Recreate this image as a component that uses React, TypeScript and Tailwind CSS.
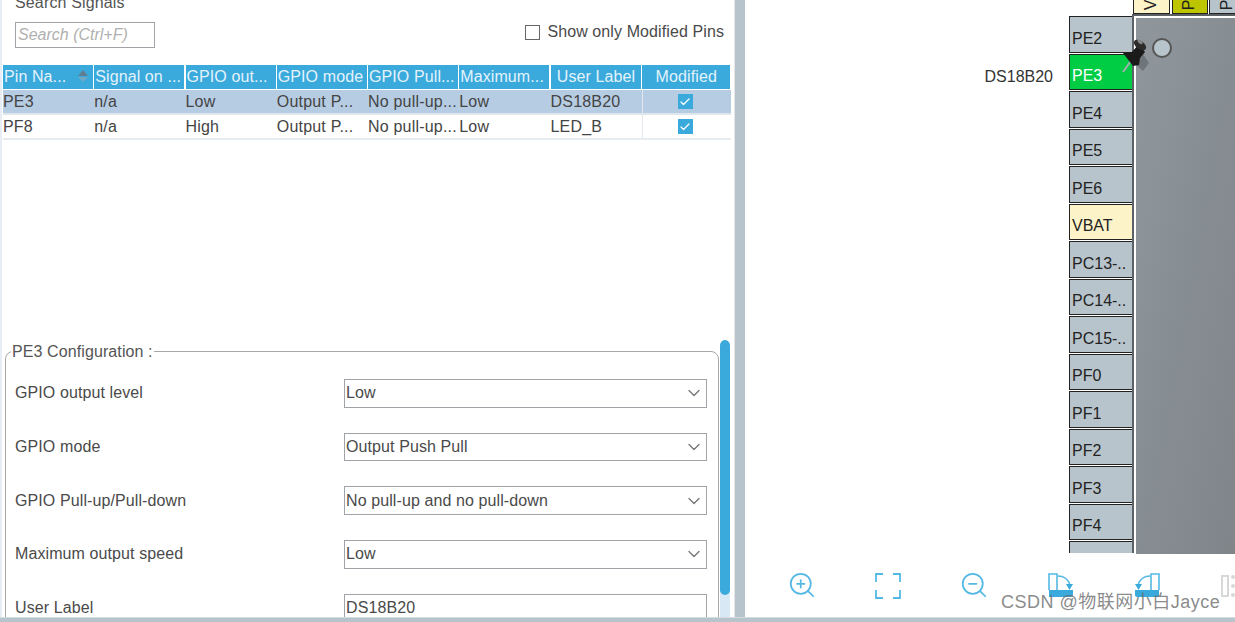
import React from 'react';
import { ChevronDown, Check, ZoomIn, ZoomOut } from 'lucide-react';

const columns = [
  { title: 'Pin Na...', w: 'w-[90px]' },
  { title: 'Signal on ...', w: 'w-[90px]' },
  { title: 'GPIO out...', w: 'w-[90px]' },
  { title: 'GPIO mode', w: 'w-[90px]' },
  { title: 'GPIO Pull...', w: 'w-[90px]' },
  { title: 'Maximum...', w: 'w-[90px]' },
  { title: 'User Label', w: 'w-[90px]', center: true },
  { title: 'Modified', w: 'w-[88px]', center: true },
];

const rows = [
  { selected: true, cells: ['PE3', 'n/a', 'Low', 'Output P...', 'No pull-up...', 'Low', 'DS18B20'] },
  { selected: false, cells: ['PF8', 'n/a', 'High', 'Output P...', 'No pull-up...', 'Low', 'LED_B'] },
];

const fields = [
  { label: 'GPIO output level', value: 'Low' },
  { label: 'GPIO mode', value: 'Output Push Pull' },
  { label: 'GPIO Pull-up/Pull-down', value: 'No pull-up and no pull-down' },
  { label: 'Maximum output speed', value: 'Low' },
];

const pins = ['PE2', 'PE3', 'PE4', 'PE5', 'PE6', 'VBAT', 'PC13-..', 'PC14-..', 'PC15-..', 'PF0', 'PF1', 'PF2', 'PF3', 'PF4', ''];

const Pin = ({ name }: { name: string }) => {
  const tone =
    name === 'PE3'
      ? 'bg-[#00cc44] text-white'
      : name === 'VBAT'
        ? 'bg-[#fdf3c8] text-[#222]'
        : 'bg-[#b8c4cb] text-[#222]';
  return (
    <div className={`h-[36.5px] shrink-0 border border-[#222] flex items-end pl-[2px] pb-[2px] leading-[22px] ${tone}`}>
      {name}
    </div>
  );
};

const RotateIcon = ({ flip }: { flip?: boolean }) => (
  <svg width="27" height="26" viewBox="0 0 27 26" className={flip ? '-scale-x-100' : ''} fill="none">
    <path d="M2 17V1h8v16" stroke="#55b8e4" strokeWidth="1.6" />
    <path d="M2 17h24v5q0 2-2 2H2z" fill="#3aa9dc" />
    <path d="M11 3c6 0 10 3 12 9" stroke="#55b8e4" strokeWidth="1.6" />
    <path d="M19 11h7l-3.5 6z" fill="#3aa9dc" />
  </svg>
);

const FitIcon = () => (
  <svg width="26" height="26" viewBox="0 0 26 26" fill="none" stroke="#55b8e4" strokeWidth="1.8">
    <path d="M8 1H1v8M18 1h7v8M8 25H1v-8M18 25h7v-8" />
  </svg>
);

const Pushpin = () => (
  <svg width="36" height="44" viewBox="0 0 36 44" className="absolute left-[-12px] top-[20px]">
    <path d="M12 27l9-9 6 9-6 8z" fill="#4a4f54" opacity="0.45" />
    <path d="M1 36l10-14" stroke="#a8adb0" strokeWidth="2" />
    <path d="M1 17l9-1 7-8 6 8-5 6-1 7-6 1z" fill="#1a1a1a" />
    <ellipse cx="18" cy="9" rx="7" ry="4" transform="rotate(35 18 9)" fill="#2c2c2c" />
    <ellipse cx="18" cy="6" rx="3" ry="1.5" transform="rotate(35 18 6)" fill="#888" />
  </svg>
);

export default function App() {
  return (
    <div className="relative h-[622px] w-[1235px] overflow-hidden bg-white font-['Liberation_Sans',sans-serif] text-[16px] text-[#4a4a4a]">
      <div className="flex h-[617px]">
        {/* left panel */}
        <div className="w-[735px] shrink-0 border-l-2 border-r border-l-[#e8edf5] border-r-[#e6e6e6] flex flex-col overflow-hidden pl-px">
          <div className="h-[65px] shrink-0 flex justify-between pl-[12px] pr-[10px]">
            <div>
              <div className="h-[22px] -mt-[8px] leading-[22px] tracking-[0.15px] text-[#555]">Search Signals</div>
              <div className="mt-[8px] w-[140px] h-[26px] border border-[#a0a4a8] pl-[2px] leading-[24px] italic text-[#b0b0b0]">
                Search (Ctrl+F)
              </div>
            </div>
            <label className="flex items-center gap-[7px] h-[20px] mt-[22px] tracking-[0.1px]">
              <span className="w-[15px] h-[15px] border border-[#666] bg-white" />
              Show only Modified Pins
            </label>
          </div>

          <div className="w-[727.5px] h-[75px] shrink-0">
            <div className="flex h-[25px] gap-[1.25px] pb-[1px]">
              {columns.map((c) => (
                <div
                  key={c.title}
                  className={`${c.w} relative shrink-0 bg-[#3aa9dc] text-[#e4f3fb] pl-[1px] leading-[23px] whitespace-nowrap overflow-hidden tracking-[0.1px] ${c.center ? 'text-center' : ''}`}
                >
                  {c.title}
                  {c.title === 'Pin Na...' && (
                    <span className="absolute right-[5px] top-[5px] flex flex-col gap-[1px]">
                      <span className="w-0 h-0 border-x-[5px] border-x-transparent border-b-[6px] border-b-[#5f7f90]" />
                      <span className="w-0 h-0 border-x-[5px] border-x-transparent border-t-[5px] border-t-[#6fa8c4]" />
                    </span>
                  )}
                </div>
              ))}
            </div>
            {rows.map((r) => (
              <div key={r.cells[0]} className={`flex h-[25px] border-b-[2px] ${r.selected ? 'bg-[#b6cce3] border-b-[#dfe6ec]' : 'bg-white border-b-[#e6ecef]'}`}>
                {r.cells.map((text, i) => (
                  <div key={i} className={`${columns[i].w} mr-[1.25px] shrink-0 leading-[23px] whitespace-nowrap overflow-hidden text-[#444] tracking-[0.2px]`}>
                    {text}
                  </div>
                ))}
                <div className="flex-1 flex items-center justify-center border-l border-[#e2e8ee] pr-[3px]">
                  <span className="w-[15px] h-[15px] bg-[#3aa9dc] flex items-center justify-center">
                    <Check size={12} strokeWidth={2.5} className="text-white" />
                  </span>
                </div>
              </div>
            ))}
          </div>

          <div className="flex-1 flex min-h-0 mt-[200px] overflow-hidden">
            {/* config group */}
            <div className="w-[716px] pl-[2px] pt-[11px] shrink-0">
              <div className="relative h-[400px] border border-[#a8a8a8] rounded-[8px] pl-[9px] pr-[11px] pt-[27px] tracking-[0.1px]">
                <div className="absolute left-[5px] -top-[10px] bg-white px-px leading-[20px] text-[#555]">PE3 Configuration :</div>
                {fields.map((f) => (
                  <div key={f.label} className="flex items-center h-[28.5px] mb-[25.2px]">
                    <span className="w-[329px] shrink-0">{f.label}</span>
                    <div className="flex-1 h-[28.5px] border border-[#a0a4a8] flex items-center justify-between pl-px pr-[2px]">
                      {f.value}
                      <ChevronDown size={20} strokeWidth={1.6} className="text-[#777]" />
                    </div>
                  </div>
                ))}
                <div className="flex items-center h-[28.5px]">
                  <span className="w-[329px] shrink-0">User Label</span>
                  <div className="flex-1 h-[28.5px] border border-[#a0a4a8] flex items-center pl-px">DS18B20</div>
                </div>
              </div>
            </div>
            {/* scrollbar */}
            <div className="w-[10px] ml-[1px] rounded-t-[5px] bg-[#d9e8f5] overflow-hidden">
              <div className="h-[255px] rounded-[5px] bg-[#3aa9dc]" />
            </div>
          </div>
        </div>

        {/* divider */}
        <div className="w-[10px] shrink-0 bg-[#b8c4cb]" />

        {/* chip view */}
        <div className="flex-1 min-w-0 flex flex-col overflow-hidden">
          <div className="h-[553px] shrink-0 flex">
            <div className="w-[324px] shrink-0 pt-[67px] pr-[16px] text-right text-[#333] leading-[20px]">DS18B20</div>
            <div className="w-[64px] shrink-0 pt-[16px] flex flex-col gap-[1px] overflow-hidden">
              {pins.map((name, i) => (
                <Pin key={i} name={name} />
              ))}
            </div>
            <div className="flex-1 min-w-0 flex flex-col">
              <div className="h-[14px] shrink-0 flex gap-[1.5px] overflow-hidden text-[#222]">
                <div className="w-[37px] shrink-0 bg-[#fdf3c8] border border-[#222] border-t-0 flex justify-center items-end"><span className="-rotate-90 leading-[16px]">V</span></div>
                <div className="w-[36px] shrink-0 bg-[#bdc400] border border-[#222] border-t-0 flex justify-center items-end"><span className="-rotate-90 leading-[16px]">P</span></div>
                <div className="w-[36px] shrink-0 bg-[#b8c4cb] border border-[#222] border-t-0 flex justify-center items-end"><span className="-rotate-90 leading-[16px]">P</span></div>
              </div>
              <div className="relative flex-1 -ml-px border-l-[2px] border-t-[2px] border-[#5c6166]">
                <div className="h-full border-l border-t border-white bg-gradient-to-br from-[#8f979d] to-[#7f8589] ml-px mt-px" />
                <Pushpin />
                <span className="absolute left-[18px] top-[22px] w-[20px] h-[20px] rounded-full border-2 border-[#555] bg-[#b8c4cb]" />
              </div>
            </div>
          </div>
          {/* toolbar */}
          <div className="flex-1 flex gap-[60px] pl-[44px] pt-[19px] overflow-hidden">
            <ZoomIn size={30} strokeWidth={1.4} className="text-[#55b8e4] shrink-0 -mx-[2px] -mt-[2px]" />
            <div className="shrink-0 mt-[1px]"><FitIcon /></div>
            <ZoomOut size={30} strokeWidth={1.4} className="text-[#55b8e4] shrink-0 -mx-[2px] -mt-[2px]" />
            <div className="shrink-0 mt-[1px]"><RotateIcon /></div>
            <div className="shrink-0 mt-[1px]"><RotateIcon flip /></div>
            <div className="shrink-0 flex gap-[2px] mt-[3px]">
              <span className="w-[8px] h-[22px] border-2 border-[#d8d8d8]" />
              <span className="w-[4px] h-[22px] border-l-4 border-dotted border-[#d8d8d8]" />
            </div>
          </div>
        </div>
      </div>
      <div className="h-[5px] bg-[#b8c4cb] border-t border-[#d5dce0]" />

      {/* watermark */}
      <div className="absolute left-[1001px] top-[592px] text-[18px] tracking-[0.5px] leading-[21px] whitespace-nowrap text-[#6b6b6b]/80 font-['Liberation_Sans','Noto_Sans_CJK_SC',sans-serif]">
        CSDN @物联网小白Jayce
      </div>
    </div>
  );
}
